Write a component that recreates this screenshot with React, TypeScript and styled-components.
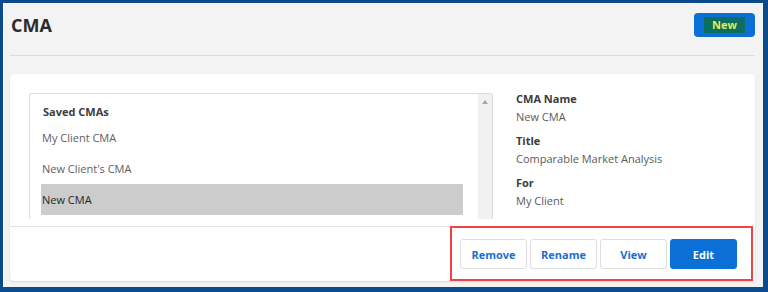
import React from "react";
import styled, { createGlobalStyle } from "styled-components";

const GlobalStyle = createGlobalStyle`
  html, body { margin: 0; padding: 0; background: #ffffff; }
  body { font-family: "Open Sans", "Liberation Sans", sans-serif; }
  * { box-sizing: border-box; }
`;

const Frame = styled.div`
  width: 768px;
  height: 292px;
  border-style: solid;
  border-color: #0b4a8b;
  border-width: 3px 5px 5px 3px;
  background: #f3f3f3;
  box-shadow: inset 1px 1px 0 #fbfbfb;
  padding: 0 8px 0 7px;
  display: flex;
  flex-direction: column;
  overflow: hidden;
`;

const Header = styled.header`
  height: 53px;
  padding-top: 10px;
  display: flex;
  align-items: flex-start;
  justify-content: space-between;
  border-bottom: 1px solid #dcdcdc;
`;

const Title = styled.h1`
  margin: 0;
  font-size: 18px;
  font-weight: 700;
  line-height: 24px;
  color: #2b2b2b;
  padding-left: 1px;
`;

const NewButton = styled.button`
  width: 61px;
  height: 24px;
  border: none;
  border-radius: 4px;
  background: #0a70d6;
  display: flex;
  align-items: center;
  justify-content: center;
  padding: 0;
  cursor: pointer;
`;

const Mark = styled.span`
  display: inline-block;
  width: 41px;
  height: 16px;
  line-height: 16px;
  background: #0b6e5e;
  color: #e2ec5c;
  font-family: "Open Sans", "Liberation Sans", sans-serif;
  font-weight: 700;
  font-size: 11px;
  text-align: center;
`;

const Card = styled.section`
  margin-top: 18px;
  height: 207px;
  background: #ffffff;
  border-radius: 4px;
  box-shadow: 0 1px 2px rgba(0, 0, 0, 0.12);
  display: flex;
  flex-direction: column;
`;

const Body = styled.div`
  height: 152px;
  padding: 19px 19px 0 19px;
  display: flex;
  align-items: flex-start;
  gap: 23px;
`;

const ListBox = styled.div`
  width: 464px;
  height: 126px;
  border: 1px solid #dcdcdc;
  border-bottom: none;
  border-radius: 3px 3px 0 0;
  display: flex;
  overflow: hidden;
`;

const ListContent = styled.div`
  flex: 1;
  padding: 8px 15px 0 11px;
`;

const ListHeading = styled.div`
  font-size: 11px;
  font-weight: 700;
  line-height: 20px;
  color: #3d3d3d;
  padding-left: 2px;
`;

const ListItem = styled.div<{ $selected?: boolean }>`
  height: 31px;
  line-height: 31px;
  font-size: 11px;
  padding-left: 1px;
  color: ${(p) => (p.$selected ? "#262626" : "#5e5e5e")};
  background: ${(p) => (p.$selected ? "#cccccc" : "transparent")};
`;

const ScrollTrack = styled.div`
  width: 14px;
  background: #f1f1f1;
  display: flex;
  justify-content: center;
  padding-top: 6px;
`;

const ArrowUp = styled.div`
  width: 0;
  height: 0;
  border-left: 3.5px solid transparent;
  border-right: 3.5px solid transparent;
  border-bottom: 4px solid #a6a6a6;
`;

const Details = styled.dl`
  margin: -3px 0 0 0;
  display: flex;
  flex-direction: column;
`;

const Label = styled.dt<{ $first?: boolean }>`
  font-size: 11px;
  font-weight: 700;
  line-height: 18px;
  color: #3b3b3b;
  margin-top: ${(p) => (p.$first ? "0" : "6px")};
`;

const Value = styled.dd`
  margin: 0;
  font-size: 11px;
  line-height: 18px;
  color: #5a5a5a;
`;

const Footer = styled.footer`
  flex: 1;
  display: flex;
  align-items: stretch;
  padding-right: 2px;
`;

const FooterLine = styled.div`
  flex: 1;
  border-top: 1px solid #e4e4e4;
`;

const ActionGroup = styled.div`
  border: 2px solid #ef4444;
  padding: 11px 14px 10px 8px;
  display: flex;
  gap: 3px;
`;

const ActionButton = styled.button<{ $primary?: boolean }>`
  width: 67px;
  height: 30px;
  border-radius: 3px;
  border: 1px solid ${(p) => (p.$primary ? "#0a70d6" : "#dddddd")};
  background: ${(p) => (p.$primary ? "#0a70d6" : "#ffffff")};
  color: ${(p) => (p.$primary ? "#ffffff" : "#1b6fd0")};
  font-family: "Open Sans", "Liberation Sans", sans-serif;
  font-weight: 700;
  font-size: 11px;
  padding: 0;
  cursor: pointer;
`;

const items = ["My Client CMA", "New Client's CMA", "New CMA"];

export default function App() {
  return (
    <>
      <GlobalStyle />
      <Frame>
        <Header>
          <Title>CMA</Title>
          <NewButton>
            <Mark>New</Mark>
          </NewButton>
        </Header>
        <Card>
          <Body>
            <ListBox>
              <ListContent>
                <ListHeading>Saved CMAs</ListHeading>
                {items.map((it, i) => (
                  <ListItem key={it} $selected={i === 2}>
                    {it}
                  </ListItem>
                ))}
              </ListContent>
              <ScrollTrack>
                <ArrowUp />
              </ScrollTrack>
            </ListBox>
            <Details>
              <Label $first>CMA Name</Label>
              <Value>New CMA</Value>
              <Label>Title</Label>
              <Value>Comparable Market Analysis</Value>
              <Label>For</Label>
              <Value>My Client</Value>
            </Details>
          </Body>
          <Footer>
            <FooterLine />
            <ActionGroup>
              <ActionButton>Remove</ActionButton>
              <ActionButton>Rename</ActionButton>
              <ActionButton>View</ActionButton>
              <ActionButton $primary>Edit</ActionButton>
            </ActionGroup>
          </Footer>
        </Card>
      </Frame>
    </>
  );
}
